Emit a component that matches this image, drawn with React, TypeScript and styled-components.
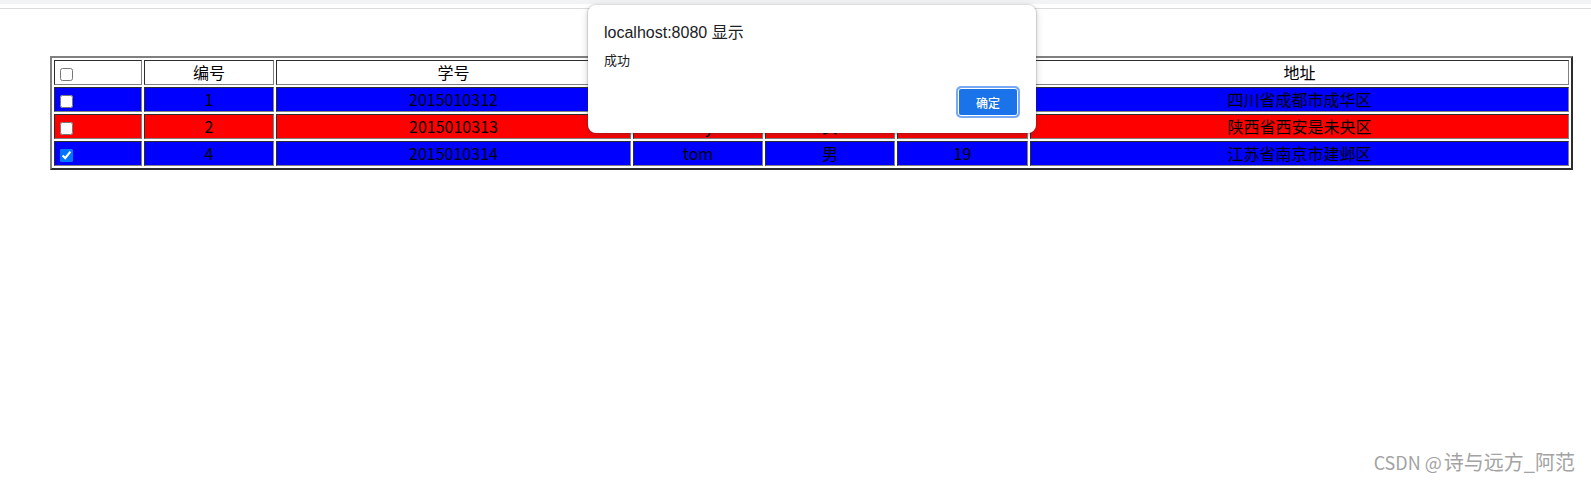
import React from 'react'
import styled, { createGlobalStyle } from 'styled-components'

const GlobalStyle = createGlobalStyle`
    html, body {
        margin: 0;
        padding: 0;
        background: #fff;
    }
    body {
        width: 1591px;
        height: 481px;
        overflow: hidden;
        font-family: "Noto Sans CJK SC", "Liberation Sans", sans-serif;
    }
`

const Page = styled.div`
    position: relative;
    width: 1591px;
    height: 481px;
`

const Strip = styled.div`
    height: 4px;
    background: #f1f3f4;
`

const Rule = styled.div`
    margin-top: 4px;
    height: 1px;
    background: #dcdcdc;
`

const Main = styled.div`
    padding: 47px 0 0 50px;
`

const Grid = styled.table`
    width: 1523px;
    table-layout: fixed;
    border: 2px outset #808080;
    border-spacing: 2px;
    font-family: "Noto Sans CJK SC", "Liberation Sans", sans-serif;
    font-size: 16px;
    color: #000;
`

interface CellProps {
    $bg?: string
    $align?: string
}

const HeadCell = styled.th<CellProps>`
    border: 1px inset #808080;
    padding: 1px;
    height: 21px;
    line-height: 21px;
    font-weight: normal;
    background: #fff;
    text-align: ${props => props.$align || 'center'};
`

const Cell = styled.td<CellProps>`
    border: 1px inset #808080;
    padding: 1px;
    height: 21px;
    line-height: 21px;
    background: ${props => props.$bg || '#fff'};
    text-align: ${props => props.$align || 'center'};
    white-space: nowrap;
    overflow: hidden;
`

const Check = styled.input`
    margin: 0 3px 0 4px;
    width: 13px;
    height: 13px;
    vertical-align: middle;
`

const Dialog = styled.div`
    position: absolute;
    left: 588px;
    top: 5px;
    width: 448px;
    height: 128px;
    box-sizing: border-box;
    padding: 18px 16px 15px 16px;
    background: #fff;
    border-radius: 8px;
    box-shadow: 0 0 0 1px rgba(0, 0, 0, 0.06), 0 1px 3px rgba(60, 64, 67, 0.3), 0 2px 6px 2px rgba(60, 64, 67, 0.12);
    display: flex;
    flex-direction: column;
    font-family: "Liberation Sans", "Noto Sans CJK SC", sans-serif;
    color: #202124;
`

const DialogTitle = styled.div`
    font-size: 16px;
    line-height: 20px;
`

const DialogText = styled.div`
    margin-top: 9px;
    font-size: 13px;
    line-height: 18px;
`

const DialogActions = styled.div`
    margin-top: auto;
    display: flex;
    justify-content: flex-end;
`

const OkButton = styled.button`
    width: 64px;
    height: 32px;
    box-sizing: border-box;
    border: 2px solid #78a9f5;
    border-radius: 5px;
    background: #1a73e8;
    box-shadow: inset 0 0 0 1px #fff;
    color: #fff;
    font-family: "Noto Sans CJK SC", sans-serif;
    font-size: 12px;
    font-weight: 500;
    padding: 0;
    cursor: pointer;
`

const Watermark = styled.div`
    position: absolute;
    right: 16px;
    top: 448px;
    font-family: "Noto Sans CJK SC", sans-serif;
    font-size: 20px;
    line-height: 28px;
    color: #a3a3a3;
`

const Small = styled.span`
    font-size: 18px;
    margin-right: 2px;
`

const columns = [88, 130, 355, 130, 130, 131, 539]
const headers = ['编号', '学号', '姓名', '性别', '年龄', '地址']

const students = [
    { id: 1, no: '2015010312', name: 'jack', sex: '男', age: 18, addr: '四川省成都市成华区', bg: '#0000ff', checked: false },
    { id: 2, no: '2015010313', name: 'lucy', sex: '女', age: 20, addr: '陕西省西安是未央区', bg: '#ff0000', checked: false },
    { id: 4, no: '2015010314', name: 'tom', sex: '男', age: 19, addr: '江苏省南京市建邺区', bg: '#0000ff', checked: true },
]

const App = () => {
    return (
        <Page>
            <GlobalStyle />
            <Strip />
            <Rule />
            <Main>
                <Grid>
                    <colgroup>
                        {columns.map((w, i) => <col key={i} style={{ width: w }} />)}
                    </colgroup>
                    <thead>
                        <tr>
                            <HeadCell $align='left'><Check type='checkbox' readOnly /></HeadCell>
                            {headers.map(h => <HeadCell key={h}>{h}</HeadCell>)}
                        </tr>
                    </thead>
                    <tbody>
                        {students.map(s => (
                            <tr key={s.id}>
                                <Cell $bg={s.bg} $align='left'>
                                    <Check type='checkbox' checked={s.checked} readOnly />
                                </Cell>
                                <Cell $bg={s.bg}>{s.id}</Cell>
                                <Cell $bg={s.bg}>{s.no}</Cell>
                                <Cell $bg={s.bg}>{s.name}</Cell>
                                <Cell $bg={s.bg}>{s.sex}</Cell>
                                <Cell $bg={s.bg}>{s.age}</Cell>
                                <Cell $bg={s.bg}>{s.addr}</Cell>
                            </tr>
                        ))}
                    </tbody>
                </Grid>
            </Main>

            <Dialog>
                <DialogTitle>localhost:8080 显示</DialogTitle>
                <DialogText>成功</DialogText>
                <DialogActions>
                    <OkButton>确定</OkButton>
                </DialogActions>
            </Dialog>

            <Watermark><Small>CSDN @</Small>诗与远方_阿范</Watermark>
        </Page>
    )
}

export default App
